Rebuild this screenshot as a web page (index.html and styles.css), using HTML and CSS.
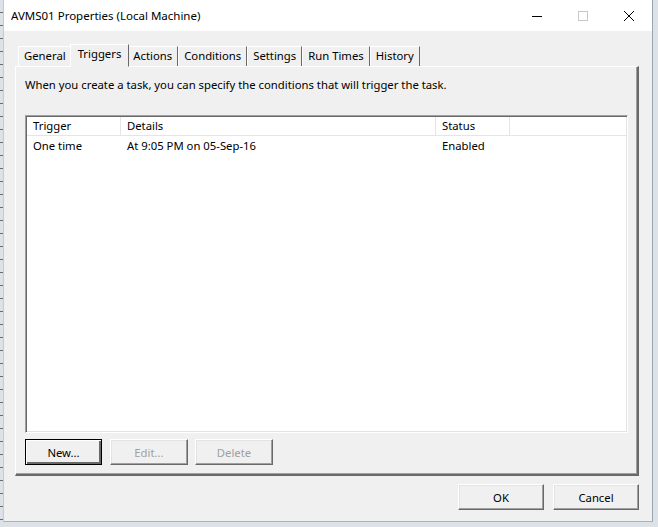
FILE: index.html
```html
<!DOCTYPE html>
<html lang="en">
<head>
    <meta charset="UTF-8">
    <title>AVMS01 Properties (Local Machine)</title>
    <link rel="stylesheet" href="styles.css">
</head>
<body>
    <div class="window">
        <!-- Title bar -->
        <div class="titlebar">
            <span class="title">AVMS01 Properties (Local Machine)</span>
            <div class="controls">
                <span class="ctl">
                    <svg width="10" height="10" viewBox="0 0 10 10"><path d="M0 5.5H10" stroke="#000" stroke-width="1"/></svg>
                </span>
                <span class="ctl">
                    <svg width="10" height="10" viewBox="0 0 10 10"><rect x="0.5" y="0.5" width="9" height="9" fill="none" stroke="#c8c8c8"/></svg>
                </span>
                <span class="ctl">
                    <svg width="10" height="10" viewBox="0 0 10 10"><path d="M0 0L10 10M10 0L0 10" stroke="#000" stroke-width="1"/></svg>
                </span>
            </div>
        </div>

        <div class="content">
            <div class="tabs">
                <span class="tab">General</span>
                <span class="tab active">Triggers</span>
                <span class="tab">Actions</span>
                <span class="tab">Conditions</span>
                <span class="tab">Settings</span>
                <span class="tab">Run Times</span>
                <span class="tab">History</span>
            </div>

            <div class="panel">
                <p class="intro">When you create a task, you can specify the conditions that will trigger the task.</p>

                <div class="list">
                    <div class="list-head">
                        <span class="col col-trigger">Trigger</span>
                        <span class="col col-details">Details</span>
                        <span class="col col-status">Status</span>
                        <span class="col col-rest"></span>
                    </div>
                    <div class="list-row">
                        <span class="col col-trigger">One time</span>
                        <span class="col col-details">At 9:05 PM on 05-Sep-16</span>
                        <span class="col col-status">Enabled</span>
                    </div>
                </div>

                <div class="list-buttons">
                    <button class="btn default">New...</button>
                    <button class="btn" disabled>Edit...</button>
                    <button class="btn" disabled>Delete</button>
                </div>
            </div>

            <div class="footer">
                <button class="btn wide">OK</button>
                <button class="btn wide">Cancel</button>
            </div>
        </div>
    </div>
</body>
</html>
```

FILE: styles.css
```css
* {
    margin: 0;
    padding: 0;
    box-sizing: border-box;
}

body {
    font-family: 'Noto Sans', 'Liberation Sans', sans-serif;
    font-size: 11.3px;
    color: #000;
    background: #dde2e8;
    background-image: repeating-linear-gradient(180deg, #dde2e8 0, #dde2e8 12px, #6b6b6b 12px, #6b6b6b 13px);
    background-size: 3px 100%;
    background-repeat: repeat-y;
    width: 658px;
    height: 527px;
    overflow: hidden;
}

.window {
    margin-left: 3px;
    width: 650px;
    height: 522px;
    background: #f0f0f0;
    border-left: 1px solid #c9c9c9;
    border-right: 1px solid #9aa5b4;
    border-bottom: 1px solid #a9b2bd;
}

/* Title bar */
.titlebar {
    height: 31px;
    background: #fff;
    display: flex;
    align-items: center;
    justify-content: space-between;
    padding-left: 7px;
}

.title {
    font-size: 11.5px;
}

.controls {
    display: flex;
    height: 100%;
}

.ctl {
    width: 46px;
    display: flex;
    align-items: center;
    justify-content: center;
}

/* Tabs */
.content {
    padding: 12px 13px 0 11px;
}

.tabs {
    display: flex;
    align-items: flex-end;
    padding-left: 3px;
    height: 23px;
}

.tab {
    height: 20px;
    line-height: 17px;
    padding: 0 5px;
    border-top: 1px solid #fff;
    border-left: 1px solid #fff;
    border-right: 1px solid #696969;
    background: #f0f0f0;
}

.tab.active {
    height: 23px;
    line-height: 18px;
    margin: 0 -2px -1px -2px;
    padding: 0 7px;
    position: relative;
    z-index: 1;
    border-bottom: 1px solid #f0f0f0;
}

.panel {
    height: 410px;
    border-top: 1px solid #fff;
    border-left: 1px solid #fff;
    border-right: 2px solid #696969;
    border-bottom: 2px solid #696969;
    box-shadow: inset -1px -1px 0 #a0a0a0;
    padding: 10px 9px 0 9px;
}

.intro {
    line-height: 16px;
    margin-bottom: 22px;
}

/* List view */
.list {
    height: 318px;
    background: #fff;
    border-top: 1px solid #a0a0a0;
    border-left: 1px solid #a0a0a0;
    border-right: 1px solid #fff;
    border-bottom: 1px solid #fff;
    box-shadow: inset 1px 1px 0 #696969, inset -1px -1px 0 #e3e3e3;
    padding: 1px 1px 0 1px;
}

.list-head, .list-row {
    display: flex;
}

.list-head {
    height: 19px;
    line-height: 18px;
    border-bottom: 1px solid #e5e5e5;
}

.list-head .col {
    border-right: 1px solid #e5e5e5;
}

.list-row {
    height: 20px;
    line-height: 20px;
}

.col {
    padding-left: 6px;
    white-space: nowrap;
}

.col-trigger {
    width: 94px;
}

.col-details {
    width: 315px;
}

.col-status {
    width: 74px;
}

.list-head .col-rest {
    flex: 1;
    border-right: none;
}

/* Buttons */
.list-buttons {
    display: flex;
    gap: 7px;
    margin-top: 6px;
}

.btn {
    font-family: inherit;
    font-size: 11.3px;
    width: 78px;
    height: 26px;
    background: #f0f0f0;
    color: #000;
    border-top: 1px solid #fff;
    border-left: 1px solid #fff;
    border-right: 1px solid #696969;
    border-bottom: 1px solid #696969;
    box-shadow: inset -1px -1px 0 #a0a0a0, inset 1px 1px 0 #e3e3e3;
}

.btn.default {
    width: 77px;
    border: 1px solid #000;
    box-shadow: inset 1px 1px 0 #fff, inset -2px -2px 0 #696969;
    margin-right: 1px;
}

.btn:disabled {
    color: #a0a0a0;
}

.footer {
    display: flex;
    justify-content: flex-end;
    gap: 9px;
    margin-top: 8px;
}

.btn.wide {
    width: 86px;
}
```
